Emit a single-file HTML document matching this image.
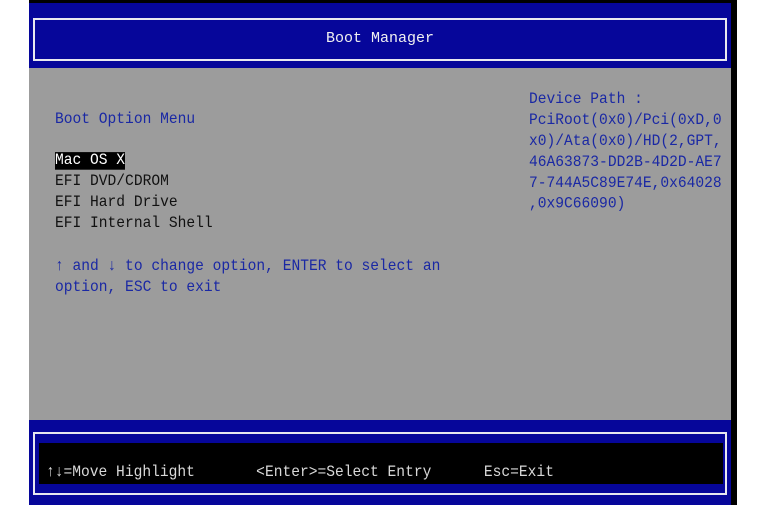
<!DOCTYPE html>
<html><head><style>
body{margin:0;width:767px;height:505px;background:#fff;position:relative;overflow:hidden;font-family:"Liberation Mono",monospace;}
.frame{position:absolute;left:29px;top:0;width:702px;height:505px;background:#9c9c9c;border-right:6px solid #000;}
.top{position:absolute;left:0;top:0;width:702px;height:68px;background:#06069a;border-top:3px solid #000;box-sizing:border-box;}
.tbox{position:absolute;left:4px;top:15px;width:694px;height:43px;border:2px solid #e8e8f0;box-sizing:border-box;color:#f0f0f0;font-size:15px;text-align:center;line-height:38px;}
.bot{position:absolute;left:0;top:420px;width:702px;height:85px;background:#06069a;}
.bbox{position:absolute;left:4px;top:12px;width:694px;height:63px;border:2px solid #e8e8f0;box-sizing:border-box;}
.band{position:absolute;left:4px;top:9px;width:684px;height:41px;background:#000;}
.t{position:absolute;font-size:14.6px;line-height:19px;white-space:pre;transform:scaleY(1.1);transform-origin:0 0;}
.b{color:#1a28a4;}
.k{color:#111;}
.f{color:#d8d8d8;}
</style></head><body>
<div class="frame">
 <div class="top"><div class="tbox">Boot Manager</div></div>
 <div class="t b" style="left:26px;top:110px">Boot Option Menu</div>
 <div class="t k" style="left:26px;top:151px"><span style="background:#000;color:#fff">Mac OS X</span>
EFI DVD/CDROM
EFI Hard Drive
EFI Internal Shell</div>
 <div class="t b" style="left:26px;top:257px">↑ and ↓ to change option, ENTER to select an
option, ESC to exit</div>
 <div class="t b" style="left:500px;top:90px">Device Path :
PciRoot(0x0)/Pci(0xD,0
x0)/Ata(0x0)/HD(2,GPT,
46A63873-DD2B-4D2D-AE7
7-744A5C89E74E,0x64028
,0x9C66090)</div>
 <div class="bot"><div class="bbox"><div class="band"></div></div>
  <div class="t f" style="left:17px;top:43px">↑↓=Move Highlight       &lt;Enter&gt;=Select Entry      Esc=Exit</div>
 </div>
</div>
</body></html>
